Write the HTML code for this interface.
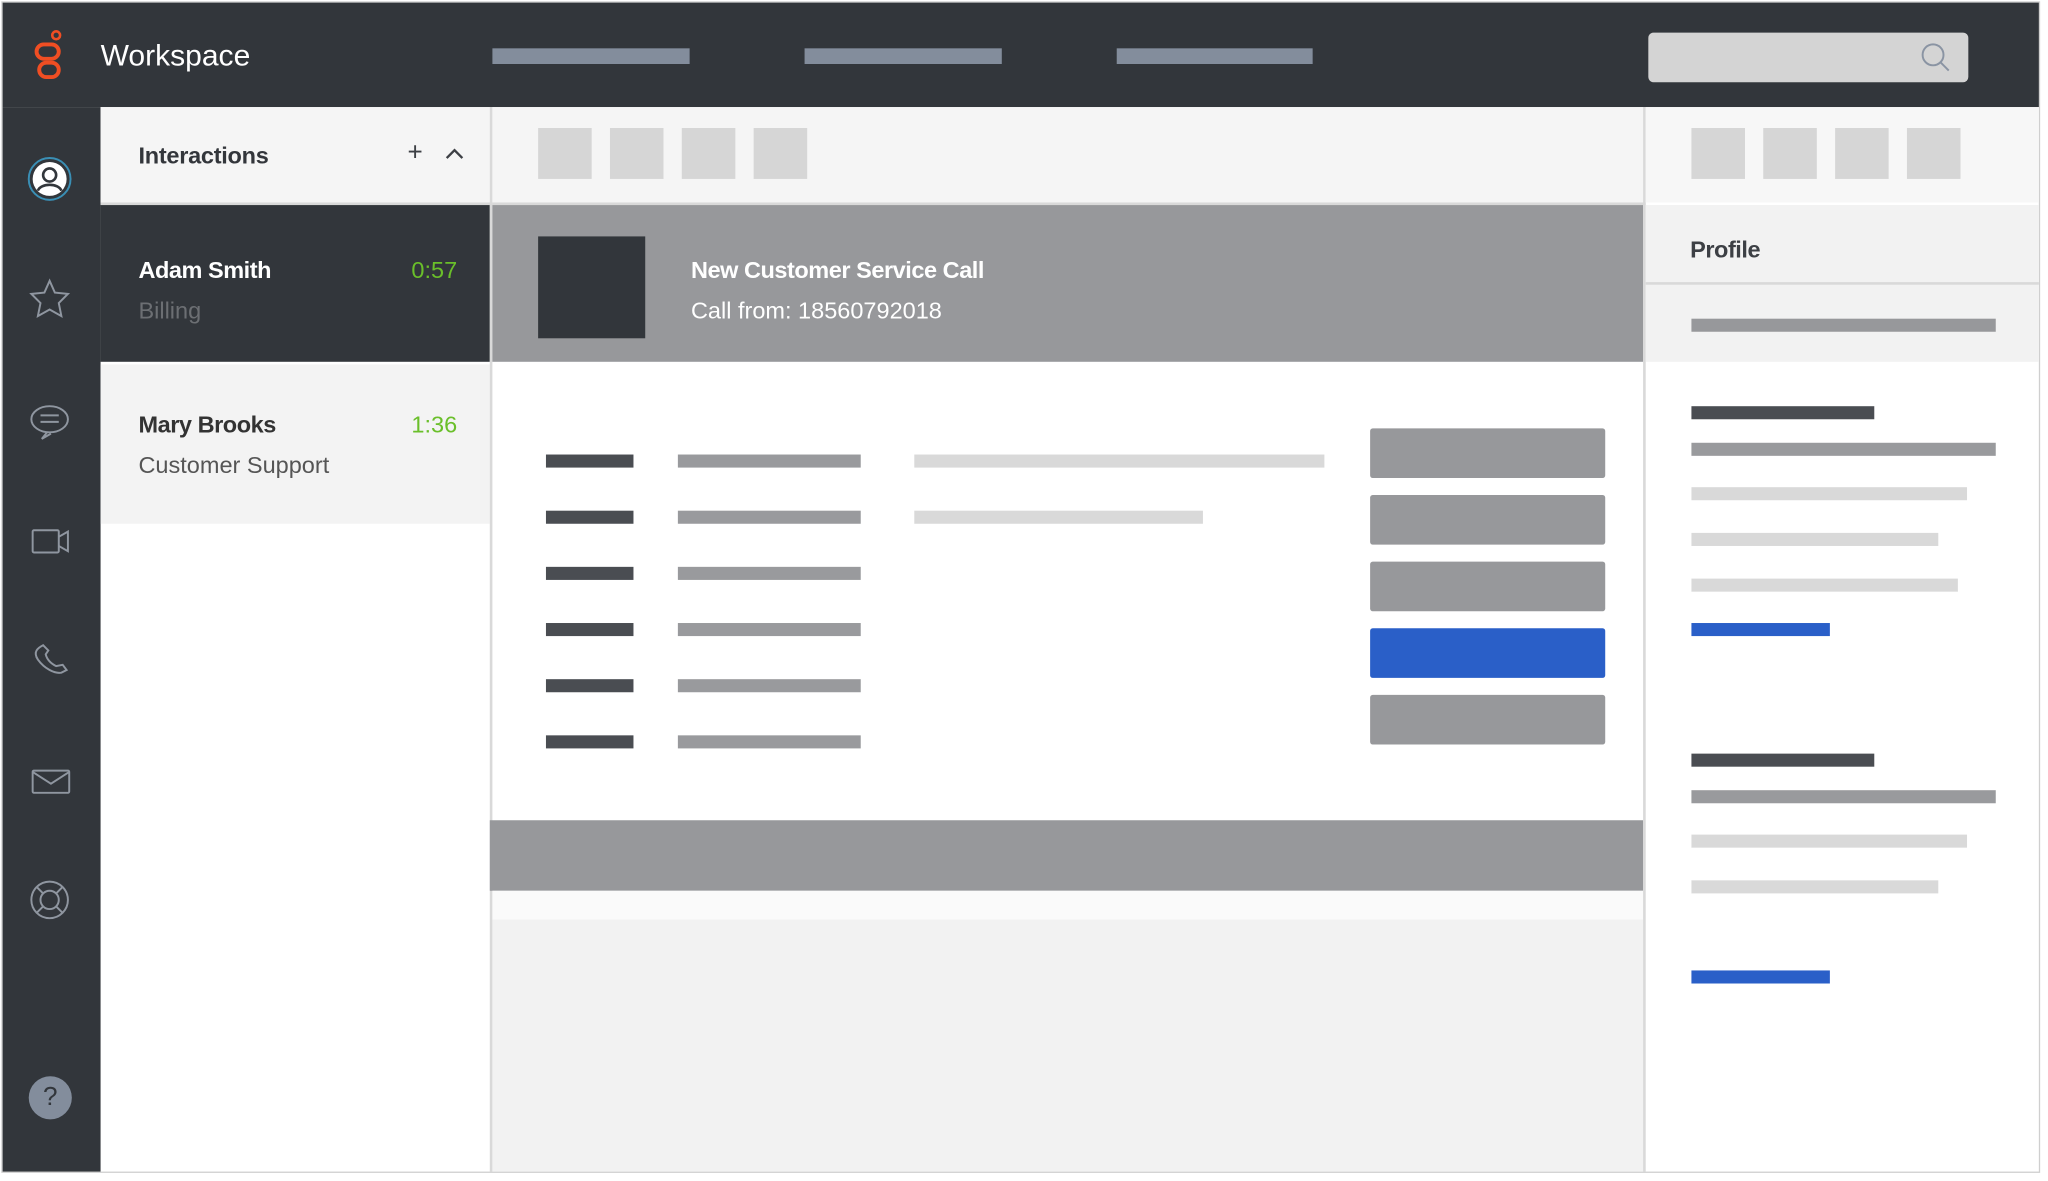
<!DOCTYPE html>
<html><head><meta charset="utf-8"><style>
*{margin:0;padding:0;box-sizing:border-box}
html,body{width:2048px;height:1181px;overflow:hidden;background:#fff}
#s{position:absolute;left:0;top:0;width:1568px;height:904px;transform:scale(1.30612);transform-origin:0 0;font-family:"Liberation Sans",Roboto,sans-serif}
.a{position:absolute}
.dk{background:#4a4d52}.gr{background:#999a9d}.lt{background:#d9d9d9}.bl{background:#2a5fc8}
.btn{position:absolute;left:1049px;width:180px;height:38px;background:#97989b;border-radius:2px}
.sq{position:absolute;width:41px;height:39px;background:#d6d6d6}
.b{font-weight:bold;letter-spacing:-0.35px}
</style></head><body><div id="s">
<div class="a" style="left:1px;top:1px;width:1561px;height:897px;border:1px solid #cfcfcf;background:#fff"></div>
<div class="a" style="left:2px;top:2px;width:1559px;height:80px;background:#32363b"></div>
<svg class="a" style="left:22px;top:22px" width="30" height="40" viewBox="0 0 30 40"><circle cx="21" cy="5" r="3" fill="none" stroke="#f04e23" stroke-width="2"/><rect x="6" y="12" width="17" height="11" rx="5.5" fill="none" stroke="#f04e23" stroke-width="3"/><rect x="8" y="26" width="15" height="11" rx="5.5" fill="none" stroke="#f04e23" stroke-width="3"/></svg>
<div class="a" style="left:77px;top:29px;font-size:23px;color:#fff">Workspace</div>
<div class="a" style="left:377px;top:37px;width:151px;height:12px;background:#838d9c"></div>
<div class="a" style="left:616px;top:37px;width:151px;height:12px;background:#838d9c"></div>
<div class="a" style="left:855px;top:37px;width:150px;height:12px;background:#838d9c"></div>
<div class="a" style="left:1262px;top:25px;width:245px;height:38px;background:#d4d4d4;border-radius:4px"></div>
<svg class="a" style="left:1468px;top:31px" width="28" height="26" viewBox="0 0 28 26"><circle cx="12" cy="11" r="8" fill="none" stroke="#8a94a3" stroke-width="1.5"/><path d="M18 17l6 6" stroke="#8a94a3" stroke-width="1.5"/></svg>
<div class="a" style="left:2px;top:82px;width:75px;height:815px;background:#32363b"></div>
<svg class="a" style="left:0;top:110px" width="77" height="760" viewBox="0 0 77 760" fill="none" stroke="#8f96a0" stroke-width="1.5">
<circle cx="38" cy="27" r="16" stroke="#3a8fb5"/><circle cx="38" cy="27" r="13" fill="#fff" stroke="none"/><circle cx="38" cy="24" r="5" stroke="#32363b" stroke-width="2"/><path d="M29 36c2-6 16-6 18 0" stroke="#32363b" stroke-width="2"/>
<path d="M38 105l4 9 10 1-7 7 2 10-9-5-9 5 2-10-7-7 10-1z"/>
<ellipse cx="38" cy="211" rx="14" ry="10"/><path d="M31 208h14M31 213h14M36 221l-4 5 7-4"/>
<rect x="25" y="296" width="20" height="17" rx="1"/><path d="M45 301l7-4v15l-7-4"/>
<path d="M33 384c-4 2-8 5-4 11 5 7 13 11 18 10l4-2-3-4-5 1c-4-2-7-5-8-9l2-3-4-4z"/>
<rect x="25" y="480" width="28" height="17" rx="1"/><path d="M25 481l14 9 14-9"/>
<circle cx="38" cy="579" r="14"/><circle cx="38" cy="579" r="7"/><path d="M28 569l5 5M48 569l-5 5M28 589l5-5M48 589l-5-5"/>
</svg>
<div class="a" style="left:22px;top:824px;width:33px;height:33px;border-radius:50%;background:#838d9c;color:#32363b;font-size:20px;text-align:center;line-height:33px">?</div>
<div class="a" style="left:77px;top:82px;width:298px;height:73px;background:#f5f5f5"></div>
<div class="a" style="left:106px;top:109px;font-size:18px;color:#33363b;font-weight:600;letter-spacing:-0.2px">Interactions</div>
<div class="a" style="left:312px;top:106px;font-size:20px;color:#3d4045">+</div>
<svg class="a" style="left:340px;top:113px" width="16" height="10"><path d="M2 8l6-6 6 6" fill="none" stroke="#3d4045" stroke-width="1.8"/></svg>
<div class="a" style="left:77px;top:155px;width:300px;height:2px;background:#d9d9d9"></div>
<div class="a" style="left:77px;top:157px;width:298px;height:120px;background:#32363b"></div>
<div class="a b" style="left:106px;top:197px;font-size:18px;color:#fff">Adam Smith</div>
<div class="a" style="left:315px;top:197px;font-size:18px;color:#6abf2a">0:57</div>
<div class="a" style="left:106px;top:228px;font-size:18px;color:#6c6f73">Billing</div>
<div class="a" style="left:77px;top:279px;width:298px;height:122px;background:#f3f3f3"></div>
<div class="a b" style="left:106px;top:315px;font-size:18px;color:#333">Mary Brooks</div>
<div class="a" style="left:315px;top:315px;font-size:18px;color:#6abf2a">1:36</div>
<div class="a" style="left:106px;top:346px;font-size:18px;color:#555">Customer Support</div>
<div class="a" style="left:375px;top:82px;width:2px;height:815px;background:#d9d9d9"></div>
<div class="a" style="left:377px;top:82px;width:881px;height:73px;background:#f5f5f5"></div>
<div class="sq" style="left:412px;top:98px"></div><div class="sq" style="left:467px;top:98px"></div><div class="sq" style="left:522px;top:98px"></div><div class="sq" style="left:577px;top:98px"></div>
<div class="a" style="left:377px;top:155px;width:883px;height:2px;background:#d9d9d9"></div>
<div class="a" style="left:377px;top:157px;width:881px;height:120px;background:#97989b"></div>
<div class="a" style="left:412px;top:181px;width:82px;height:78px;background:#32363b"></div>
<div class="a b" style="left:529px;top:197px;font-size:18px;color:#fff">New Customer Service Call</div>
<div class="a" style="left:529px;top:228px;font-size:18px;color:#fff">Call from: 18560792018</div>
<div class="a dk" style="left:418px;top:348px;width:67px;height:10px"></div><div class="a gr" style="left:519px;top:348px;width:140px;height:10px"></div><div class="a lt" style="left:700px;top:348px;width:314px;height:10px"></div>
<div class="a dk" style="left:418px;top:391px;width:67px;height:10px"></div><div class="a gr" style="left:519px;top:391px;width:140px;height:10px"></div><div class="a lt" style="left:700px;top:391px;width:221px;height:10px"></div>
<div class="a dk" style="left:418px;top:434px;width:67px;height:10px"></div><div class="a gr" style="left:519px;top:434px;width:140px;height:10px"></div>
<div class="a dk" style="left:418px;top:477px;width:67px;height:10px"></div><div class="a gr" style="left:519px;top:477px;width:140px;height:10px"></div>
<div class="a dk" style="left:418px;top:520px;width:67px;height:10px"></div><div class="a gr" style="left:519px;top:520px;width:140px;height:10px"></div>
<div class="a dk" style="left:418px;top:563px;width:67px;height:10px"></div><div class="a gr" style="left:519px;top:563px;width:140px;height:10px"></div>
<div class="btn" style="top:328px"></div><div class="btn" style="top:379px"></div><div class="btn" style="top:430px"></div><div class="btn" style="top:481px;background:#2a5fc8"></div><div class="btn" style="top:532px"></div>
<div class="a" style="left:375px;top:628px;width:883px;height:54px;background:#97989b"></div>
<div class="a" style="left:377px;top:682px;width:881px;height:22px;background:#fafafa"></div>
<div class="a" style="left:377px;top:704px;width:881px;height:193px;background:#f2f2f2"></div>
<div class="a" style="left:1258px;top:82px;width:2px;height:815px;background:#d9d9d9"></div>
<div class="a" style="left:1260px;top:82px;width:301px;height:73px;background:#f7f7f7"></div>
<div class="sq" style="left:1295px;top:98px"></div><div class="sq" style="left:1350px;top:98px"></div><div class="sq" style="left:1405px;top:98px"></div><div class="sq" style="left:1460px;top:98px"></div>
<div class="a" style="left:1260px;top:157px;width:301px;height:120px;background:#f2f2f2"></div>
<div class="a" style="left:1260px;top:216px;width:301px;height:2px;background:#d9d9d9"></div>
<div class="a b" style="left:1294px;top:181px;font-size:18px;color:#3d4045">Profile</div>
<div class="a" style="left:1295px;top:244px;width:233px;height:10px;background:#97989b"></div>
<div class="a dk" style="left:1295px;top:311px;width:140px;height:10px"></div>
<div class="a gr" style="left:1295px;top:339px;width:233px;height:10px"></div>
<div class="a lt" style="left:1295px;top:373px;width:211px;height:10px"></div>
<div class="a lt" style="left:1295px;top:408px;width:189px;height:10px"></div>
<div class="a lt" style="left:1295px;top:443px;width:204px;height:10px"></div>
<div class="a bl" style="left:1295px;top:477px;width:106px;height:10px"></div>
<div class="a dk" style="left:1295px;top:577px;width:140px;height:10px"></div>
<div class="a gr" style="left:1295px;top:605px;width:233px;height:10px"></div>
<div class="a lt" style="left:1295px;top:639px;width:211px;height:10px"></div>
<div class="a lt" style="left:1295px;top:674px;width:189px;height:10px"></div>
<div class="a bl" style="left:1295px;top:743px;width:106px;height:10px"></div>
</div></body></html>
